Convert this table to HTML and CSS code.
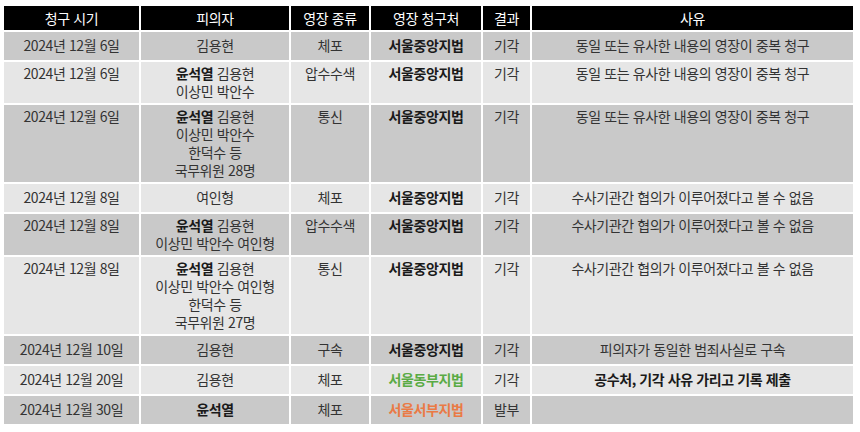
FILE: index.html
```html
<!DOCTYPE html>
<html lang="ko">
<head>
<meta charset="utf-8">
<link rel="stylesheet" href="styles.css">
</head>
<body>
<div class="table">
  <div class="row head">
    <div class="cell">청구 시기</div>
    <div class="cell">피의자</div>
    <div class="cell">영장 종류</div>
    <div class="cell">영장 청구처</div>
    <div class="cell">결과</div>
    <div class="cell">사유</div>
  </div>
  <div class="row dark single">
    <div class="cell">2024년 12월 6일</div>
    <div class="cell">김용현</div>
    <div class="cell">체포</div>
    <div class="cell strong">서울중앙지법</div>
    <div class="cell">기각</div>
    <div class="cell">동일 또는 유사한 내용의 영장이 중복 청구</div>
  </div>
  <div class="row light">
    <div class="cell">2024년 12월 6일</div>
    <div class="cell names">
      <div><b>윤석열</b> 김용현</div>
      <div>이상민 박안수</div>
    </div>
    <div class="cell">압수수색</div>
    <div class="cell strong">서울중앙지법</div>
    <div class="cell">기각</div>
    <div class="cell">동일 또는 유사한 내용의 영장이 중복 청구</div>
  </div>
  <div class="row dark">
    <div class="cell">2024년 12월 6일</div>
    <div class="cell names">
      <div><b>윤석열</b> 김용현</div>
      <div>이상민 박안수</div>
      <div>한덕수 등</div>
      <div>국무위원 28명</div>
    </div>
    <div class="cell">통신</div>
    <div class="cell strong">서울중앙지법</div>
    <div class="cell">기각</div>
    <div class="cell">동일 또는 유사한 내용의 영장이 중복 청구</div>
  </div>
  <div class="row light single">
    <div class="cell">2024년 12월 8일</div>
    <div class="cell">여인형</div>
    <div class="cell">체포</div>
    <div class="cell strong">서울중앙지법</div>
    <div class="cell">기각</div>
    <div class="cell">수사기관간 협의가 이루어졌다고 볼 수 없음</div>
  </div>
  <div class="row dark">
    <div class="cell">2024년 12월 8일</div>
    <div class="cell names">
      <div><b>윤석열</b> 김용현</div>
      <div>이상민 박안수 여인형</div>
    </div>
    <div class="cell">압수수색</div>
    <div class="cell strong">서울중앙지법</div>
    <div class="cell">기각</div>
    <div class="cell">수사기관간 협의가 이루어졌다고 볼 수 없음</div>
  </div>
  <div class="row light">
    <div class="cell">2024년 12월 8일</div>
    <div class="cell names">
      <div><b>윤석열</b> 김용현</div>
      <div>이상민 박안수 여인형</div>
      <div>한덕수 등</div>
      <div>국무위원 27명</div>
    </div>
    <div class="cell">통신</div>
    <div class="cell strong">서울중앙지법</div>
    <div class="cell">기각</div>
    <div class="cell">수사기관간 협의가 이루어졌다고 볼 수 없음</div>
  </div>
  <div class="row dark single">
    <div class="cell">2024년 12월 10일</div>
    <div class="cell">김용현</div>
    <div class="cell">구속</div>
    <div class="cell strong">서울중앙지법</div>
    <div class="cell">기각</div>
    <div class="cell">피의자가 동일한 범죄사실로 구속</div>
  </div>
  <div class="row light single">
    <div class="cell">2024년 12월 20일</div>
    <div class="cell">김용현</div>
    <div class="cell">체포</div>
    <div class="cell green">서울동부지법</div>
    <div class="cell">기각</div>
    <div class="cell strong">공수처, 기각 사유 가리고 기록 제출</div>
  </div>
  <div class="row dark single">
    <div class="cell">2024년 12월 30일</div>
    <div class="cell strong">윤석열</div>
    <div class="cell">체포</div>
    <div class="cell orange">서울서부지법</div>
    <div class="cell">발부</div>
    <div class="cell"></div>
  </div>
</div>
</body>
</html>
```

FILE: styles.css
```css
html, body {
  margin: 0;
  padding: 0;
  background: #ffffff;
}
body {
  padding: 6px 4px 0 4px;
  font-family: "Noto Sans CJK KR", "Noto Sans", sans-serif;
  font-size: 14px;
  color: #333333;
  letter-spacing: -0.4px;
}
.table {
  width: 849px;
  display: flex;
  flex-direction: column;
  gap: 2px;
}
.row {
  display: grid;
  grid-template-columns: 135px 148px 78px 110px 47px 321px;
  column-gap: 2px;
}
.cell {
  display: flex;
  justify-content: center;
  align-items: flex-start;
  text-align: center;
  line-height: 18px;
  padding: 2px 2px 3px;
  white-space: nowrap;
}
.names {
  flex-direction: column;
  align-items: center;
  justify-content: flex-start;
}
.single .cell {
  min-height: 28px;
  box-sizing: border-box;
  padding-top: 4px;
}
.head .cell {
  background: #000000;
  color: #ffffff;
  line-height: 24px;
  padding: 0;
}
.dark .cell {
  background: #c9c9c9;
}
.light .cell {
  background: #e6e6e6;
}
b, .strong {
  font-weight: 700;
  color: #1a1a1a;
}
.green {
  color: #5aab45;
  font-weight: 700;
}
.orange {
  color: #ea7a45;
  font-weight: 700;
}
```
